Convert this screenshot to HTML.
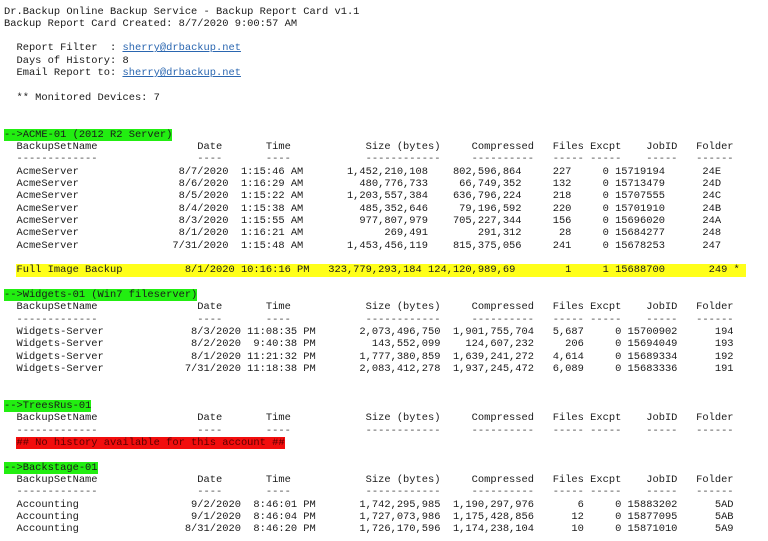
<!DOCTYPE html>
<html><head><meta charset="utf-8"><style>
html,body{margin:0;padding:0;background:#fff;width:768px;height:535px;overflow:hidden}
body{font-family:"Liberation Mono",monospace;font-size:10.4px;color:#1a1a1a;padding-top:5.5px}
.l{position:relative;height:12.33px;line-height:12.33px;white-space:pre}
.l i{position:absolute;top:0;left:calc(4px + var(--c)*1ch);font-style:normal;white-space:pre}
a{color:#2a66b0;text-decoration:underline}
.g{background:#22ee11}
.y{background:#ffff1a}
.r{background:#f20d0d;color:#5a0000}
.d{color:#444}
</style></head><body>
<div class="l"><i style="--c:0">Dr.Backup Online Backup Service - Backup Report Card v1.1</i></div>
<div class="l"><i style="--c:0">Backup Report Card Created: 8/7/2020 9:00:57 AM</i></div>
<div class="l"></div>
<div class="l"><i style="--c:2">Report Filter  : <a>sherry@drbackup.net</a></i></div>
<div class="l"><i style="--c:2">Days of History: 8</i></div>
<div class="l"><i style="--c:2">Email Report to: <a>sherry@drbackup.net</a></i></div>
<div class="l"></div>
<div class="l"><i style="--c:2">** Monitored Devices: 7</i></div>
<div class="l"></div>
<div class="l"></div>
<div class="l"><i style="--c:0" class="g">--&gt;ACME-01 (2012 R2 Server)</i></div>
<div class="l"><i style="--c:2">BackupSetName</i><i style="--c:31">Date</i><i style="--c:42">Time</i><i style="--c:58">Size (bytes)</i><i style="--c:75">Compressed</i><i style="--c:88">Files</i><i style="--c:94">Excpt</i><i style="--c:103">JobID</i><i style="--c:111">Folder</i></div>
<div class="l d"><i style="--c:2">-------------</i><i style="--c:31">----</i><i style="--c:42">----</i><i style="--c:58">------------</i><i style="--c:75">----------</i><i style="--c:88">-----</i><i style="--c:94">-----</i><i style="--c:103">-----</i><i style="--c:111">------</i></div>
<div class="l"><i style="--c:2">AcmeServer</i><i style="--c:28">8/7/2020</i><i style="--c:38">1:15:46 AM</i><i style="--c:55">1,452,210,108</i><i style="--c:72">802,596,864</i><i style="--c:88">227</i><i style="--c:96">0</i><i style="--c:98">15719194</i><i style="--c:112">24E</i></div>
<div class="l"><i style="--c:2">AcmeServer</i><i style="--c:28">8/6/2020</i><i style="--c:38">1:16:29 AM</i><i style="--c:57">480,776,733</i><i style="--c:73">66,749,352</i><i style="--c:88">132</i><i style="--c:96">0</i><i style="--c:98">15713479</i><i style="--c:112">24D</i></div>
<div class="l"><i style="--c:2">AcmeServer</i><i style="--c:28">8/5/2020</i><i style="--c:38">1:15:22 AM</i><i style="--c:55">1,203,557,384</i><i style="--c:72">636,796,224</i><i style="--c:88">218</i><i style="--c:96">0</i><i style="--c:98">15707555</i><i style="--c:112">24C</i></div>
<div class="l"><i style="--c:2">AcmeServer</i><i style="--c:28">8/4/2020</i><i style="--c:38">1:15:38 AM</i><i style="--c:57">485,352,646</i><i style="--c:73">79,196,592</i><i style="--c:88">220</i><i style="--c:96">0</i><i style="--c:98">15701910</i><i style="--c:112">24B</i></div>
<div class="l"><i style="--c:2">AcmeServer</i><i style="--c:28">8/3/2020</i><i style="--c:38">1:15:55 AM</i><i style="--c:57">977,807,979</i><i style="--c:72">705,227,344</i><i style="--c:88">156</i><i style="--c:96">0</i><i style="--c:98">15696020</i><i style="--c:112">24A</i></div>
<div class="l"><i style="--c:2">AcmeServer</i><i style="--c:28">8/1/2020</i><i style="--c:38">1:16:21 AM</i><i style="--c:61">269,491</i><i style="--c:76">291,312</i><i style="--c:89">28</i><i style="--c:96">0</i><i style="--c:98">15684277</i><i style="--c:112">248</i></div>
<div class="l"><i style="--c:2">AcmeServer</i><i style="--c:27">7/31/2020</i><i style="--c:38">1:15:48 AM</i><i style="--c:55">1,453,456,119</i><i style="--c:72">815,375,056</i><i style="--c:88">241</i><i style="--c:96">0</i><i style="--c:98">15678253</i><i style="--c:112">247</i></div>
<div class="l"></div>
<div class="l"><i style="--c:2" class="y">Full Image Backup          8/1/2020 10:16:16 PM   323,779,293,184 124,120,989,69        1     1 15688700       249 * </i></div>
<div class="l"></div>
<div class="l"><i style="--c:0" class="g">--&gt;Widgets-01 (Win7 fileserver)</i></div>
<div class="l"><i style="--c:2">BackupSetName</i><i style="--c:31">Date</i><i style="--c:42">Time</i><i style="--c:58">Size (bytes)</i><i style="--c:75">Compressed</i><i style="--c:88">Files</i><i style="--c:94">Excpt</i><i style="--c:103">JobID</i><i style="--c:111">Folder</i></div>
<div class="l d"><i style="--c:2">-------------</i><i style="--c:31">----</i><i style="--c:42">----</i><i style="--c:58">------------</i><i style="--c:75">----------</i><i style="--c:88">-----</i><i style="--c:94">-----</i><i style="--c:103">-----</i><i style="--c:111">------</i></div>
<div class="l"><i style="--c:2">Widgets-Server</i><i style="--c:30">8/3/2020</i><i style="--c:39">11:08:35 PM</i><i style="--c:57">2,073,496,750</i><i style="--c:72">1,901,755,704</i><i style="--c:88">5,687</i><i style="--c:98">0</i><i style="--c:100">15700902</i><i style="--c:114">194</i></div>
<div class="l"><i style="--c:2">Widgets-Server</i><i style="--c:30">8/2/2020</i><i style="--c:40">9:40:38 PM</i><i style="--c:59">143,552,099</i><i style="--c:74">124,607,232</i><i style="--c:90">206</i><i style="--c:98">0</i><i style="--c:100">15694049</i><i style="--c:114">193</i></div>
<div class="l"><i style="--c:2">Widgets-Server</i><i style="--c:30">8/1/2020</i><i style="--c:39">11:21:32 PM</i><i style="--c:57">1,777,380,859</i><i style="--c:72">1,639,241,272</i><i style="--c:88">4,614</i><i style="--c:98">0</i><i style="--c:100">15689334</i><i style="--c:114">192</i></div>
<div class="l"><i style="--c:2">Widgets-Server</i><i style="--c:29">7/31/2020</i><i style="--c:39">11:18:38 PM</i><i style="--c:57">2,083,412,278</i><i style="--c:72">1,937,245,472</i><i style="--c:88">6,089</i><i style="--c:98">0</i><i style="--c:100">15683336</i><i style="--c:114">191</i></div>
<div class="l"></div>
<div class="l"></div>
<div class="l"><i style="--c:0" class="g">--&gt;TreesRus-01</i></div>
<div class="l"><i style="--c:2">BackupSetName</i><i style="--c:31">Date</i><i style="--c:42">Time</i><i style="--c:58">Size (bytes)</i><i style="--c:75">Compressed</i><i style="--c:88">Files</i><i style="--c:94">Excpt</i><i style="--c:103">JobID</i><i style="--c:111">Folder</i></div>
<div class="l d"><i style="--c:2">-------------</i><i style="--c:31">----</i><i style="--c:42">----</i><i style="--c:58">------------</i><i style="--c:75">----------</i><i style="--c:88">-----</i><i style="--c:94">-----</i><i style="--c:103">-----</i><i style="--c:111">------</i></div>
<div class="l"><i style="--c:2" class="r">## No history available for this account ##</i></div>
<div class="l"></div>
<div class="l"><i style="--c:0" class="g">--&gt;Backstage-01</i></div>
<div class="l"><i style="--c:2">BackupSetName</i><i style="--c:31">Date</i><i style="--c:42">Time</i><i style="--c:58">Size (bytes)</i><i style="--c:75">Compressed</i><i style="--c:88">Files</i><i style="--c:94">Excpt</i><i style="--c:103">JobID</i><i style="--c:111">Folder</i></div>
<div class="l d"><i style="--c:2">-------------</i><i style="--c:31">----</i><i style="--c:42">----</i><i style="--c:58">------------</i><i style="--c:75">----------</i><i style="--c:88">-----</i><i style="--c:94">-----</i><i style="--c:103">-----</i><i style="--c:111">------</i></div>
<div class="l"><i style="--c:2">Accounting</i><i style="--c:30">9/2/2020</i><i style="--c:40">8:46:01 PM</i><i style="--c:57">1,742,295,985</i><i style="--c:72">1,190,297,976</i><i style="--c:92">6</i><i style="--c:98">0</i><i style="--c:100">15883202</i><i style="--c:114">5AD</i></div>
<div class="l"><i style="--c:2">Accounting</i><i style="--c:30">9/1/2020</i><i style="--c:40">8:46:04 PM</i><i style="--c:57">1,727,073,986</i><i style="--c:72">1,175,428,856</i><i style="--c:91">12</i><i style="--c:98">0</i><i style="--c:100">15877095</i><i style="--c:114">5AB</i></div>
<div class="l"><i style="--c:2">Accounting</i><i style="--c:29">8/31/2020</i><i style="--c:40">8:46:20 PM</i><i style="--c:57">1,726,170,596</i><i style="--c:72">1,174,238,104</i><i style="--c:91">10</i><i style="--c:98">0</i><i style="--c:100">15871010</i><i style="--c:114">5A9</i></div>
</body></html>
